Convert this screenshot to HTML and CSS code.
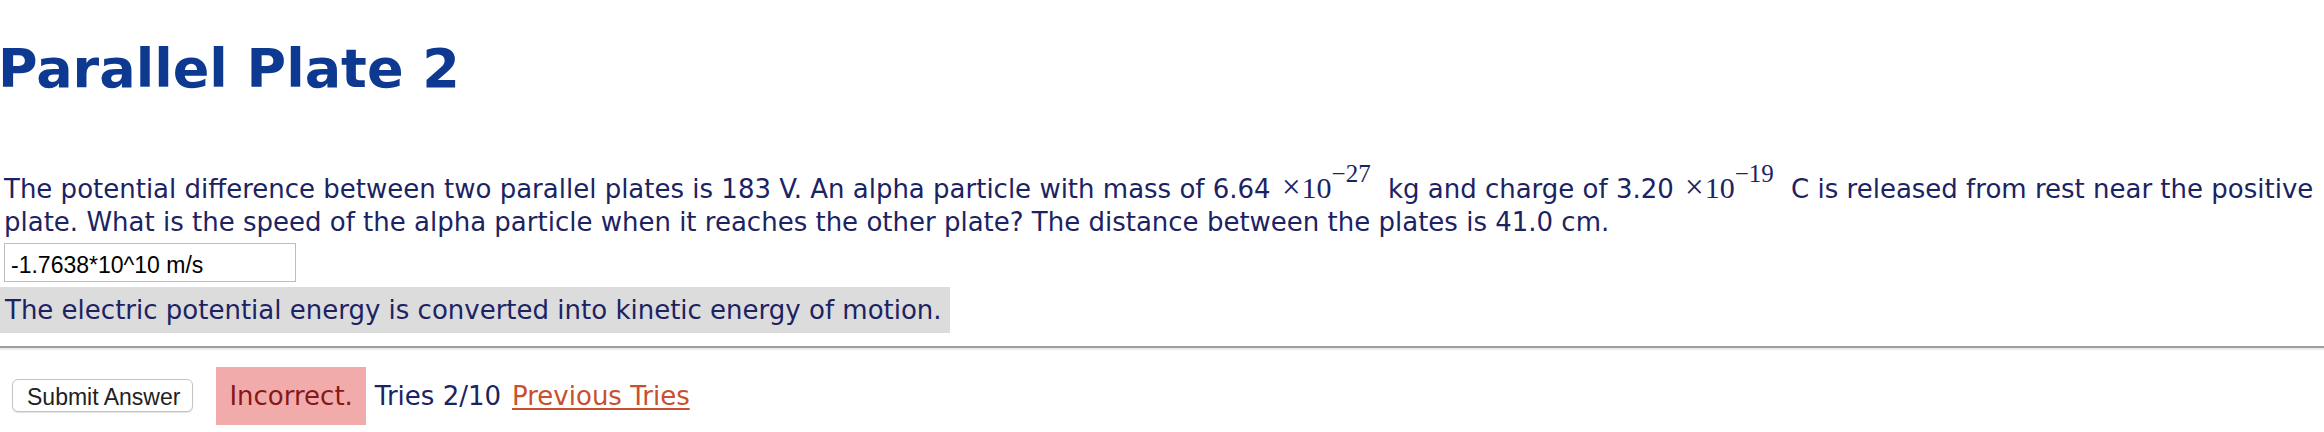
FILE: index.html
```html
<!DOCTYPE html>
<html lang="en">
<head>
<meta charset="utf-8">
<title>Parallel Plate 2</title>
<link rel="stylesheet" href="styles.css">
</head>
<body>
<div class="page">
  <h1 class="title">Parallel Plate 2</h1>
  <div class="problem">
    <p class="question">The potential difference between two parallel plates is 183 V. An alpha particle with mass of 6.64 <span class="math"><span class="times">×</span><span class="base">10</span><span class="exp">−27</span></span> kg and charge of 3.20 <span class="math"><span class="times">×</span><span class="base">10</span><span class="exp">−19</span></span> C is released from rest near the positive plate. What is the speed of the alpha particle when it reaches the other plate? The distance between the plates is 41.0 cm.</p>
    <input class="answer-input" type="text" value="-1.7638*10^10 m/s">
  </div>
  <div class="hint">The electric potential energy is converted into kinetic energy of motion.</div>
  <hr class="divider">
  <div class="actions">
    <button class="submit" type="button">Submit Answer</button>
    <span class="status">Incorrect.</span>
    <span class="tries">Tries 2/10</span>
    <a class="prev-tries" href="#">Previous Tries</a>
  </div>
</div>
</body>
</html>
```

FILE: styles.css
```css
html, body {
  margin: 0;
  padding: 0;
  background: #ffffff;
}

.page {
  padding-top: 37px;
  font-family: "DejaVu Sans", Verdana, sans-serif;
  color: #1c2362;
}

.title {
  margin: 0 0 0 -2px;
  font-family: "DejaVu Sans", Verdana, sans-serif;
  font-weight: bold;
  font-size: 54px;
  line-height: 64px;
  color: #0e3991;
}

.problem {
  margin-top: 72px;
  padding-left: 4px;
}

.question {
  margin: 0 -16px 0 0;
  font-size: 26px;
  line-height: 33px;
}

.math {
  font-family: "Liberation Serif", "Times New Roman", serif;
  line-height: 0;
  margin-left: 3px;
  margin-right: 9px;
}

.times {
  font-size: 33px;
  margin-right: 1px;
}

.base {
  font-size: 30px;
}

.exp {
  font-size: 25px;
  vertical-align: 16px;
}

.answer-input {
  display: block;
  box-sizing: border-box;
  width: 292px;
  height: 39px;
  margin: 4px 0 0 0;
  padding: 5px 6px 0 6px;
  border: 1px solid #bdbdbd;
  border-radius: 0;
  font-family: "Liberation Sans", Arial, sans-serif;
  font-size: 23px;
  color: #000000;
  background: #ffffff;
  outline: none;
}

.hint {
  width: fit-content;
  margin-top: 5px;
  padding: 6.5px 8px 6.5px 5px;
  background: #dcdcdc;
  font-size: 26px;
  line-height: 33px;
}

.divider {
  margin: 13px 0 0 0;
  height: 0;
  border-style: solid;
  border-width: 2px 0 2px 0;
  border-color: #9d9d9d transparent #ececec transparent;
}

.actions {
  display: flex;
  align-items: baseline;
  margin-top: 17px;
  padding-left: 12px;
  font-size: 26px;
  line-height: 32px;
}

.submit {
  box-sizing: border-box;
  height: 33px;
  margin: 0 23px 0 0;
  padding: 5px 12px 1px 14px;
  border: 1px solid #c4c4c4;
  border-radius: 6px;
  background: #ffffff;
  box-shadow: 0 1px 1px rgba(0, 0, 0, 0.12);
  font-family: "Liberation Sans", Arial, sans-serif;
  font-size: 23px;
  line-height: 25px;
  color: #222222;
}

.status {
  padding: 13px 13px;
  background: #f2abab;
  color: #861818;
}

.tries {
  margin-left: 9px;
}

.prev-tries {
  margin-left: 11px;
  color: #c8502f;
  text-decoration: underline;
  text-decoration-thickness: 2px;
  text-underline-offset: 3px;
}
```
